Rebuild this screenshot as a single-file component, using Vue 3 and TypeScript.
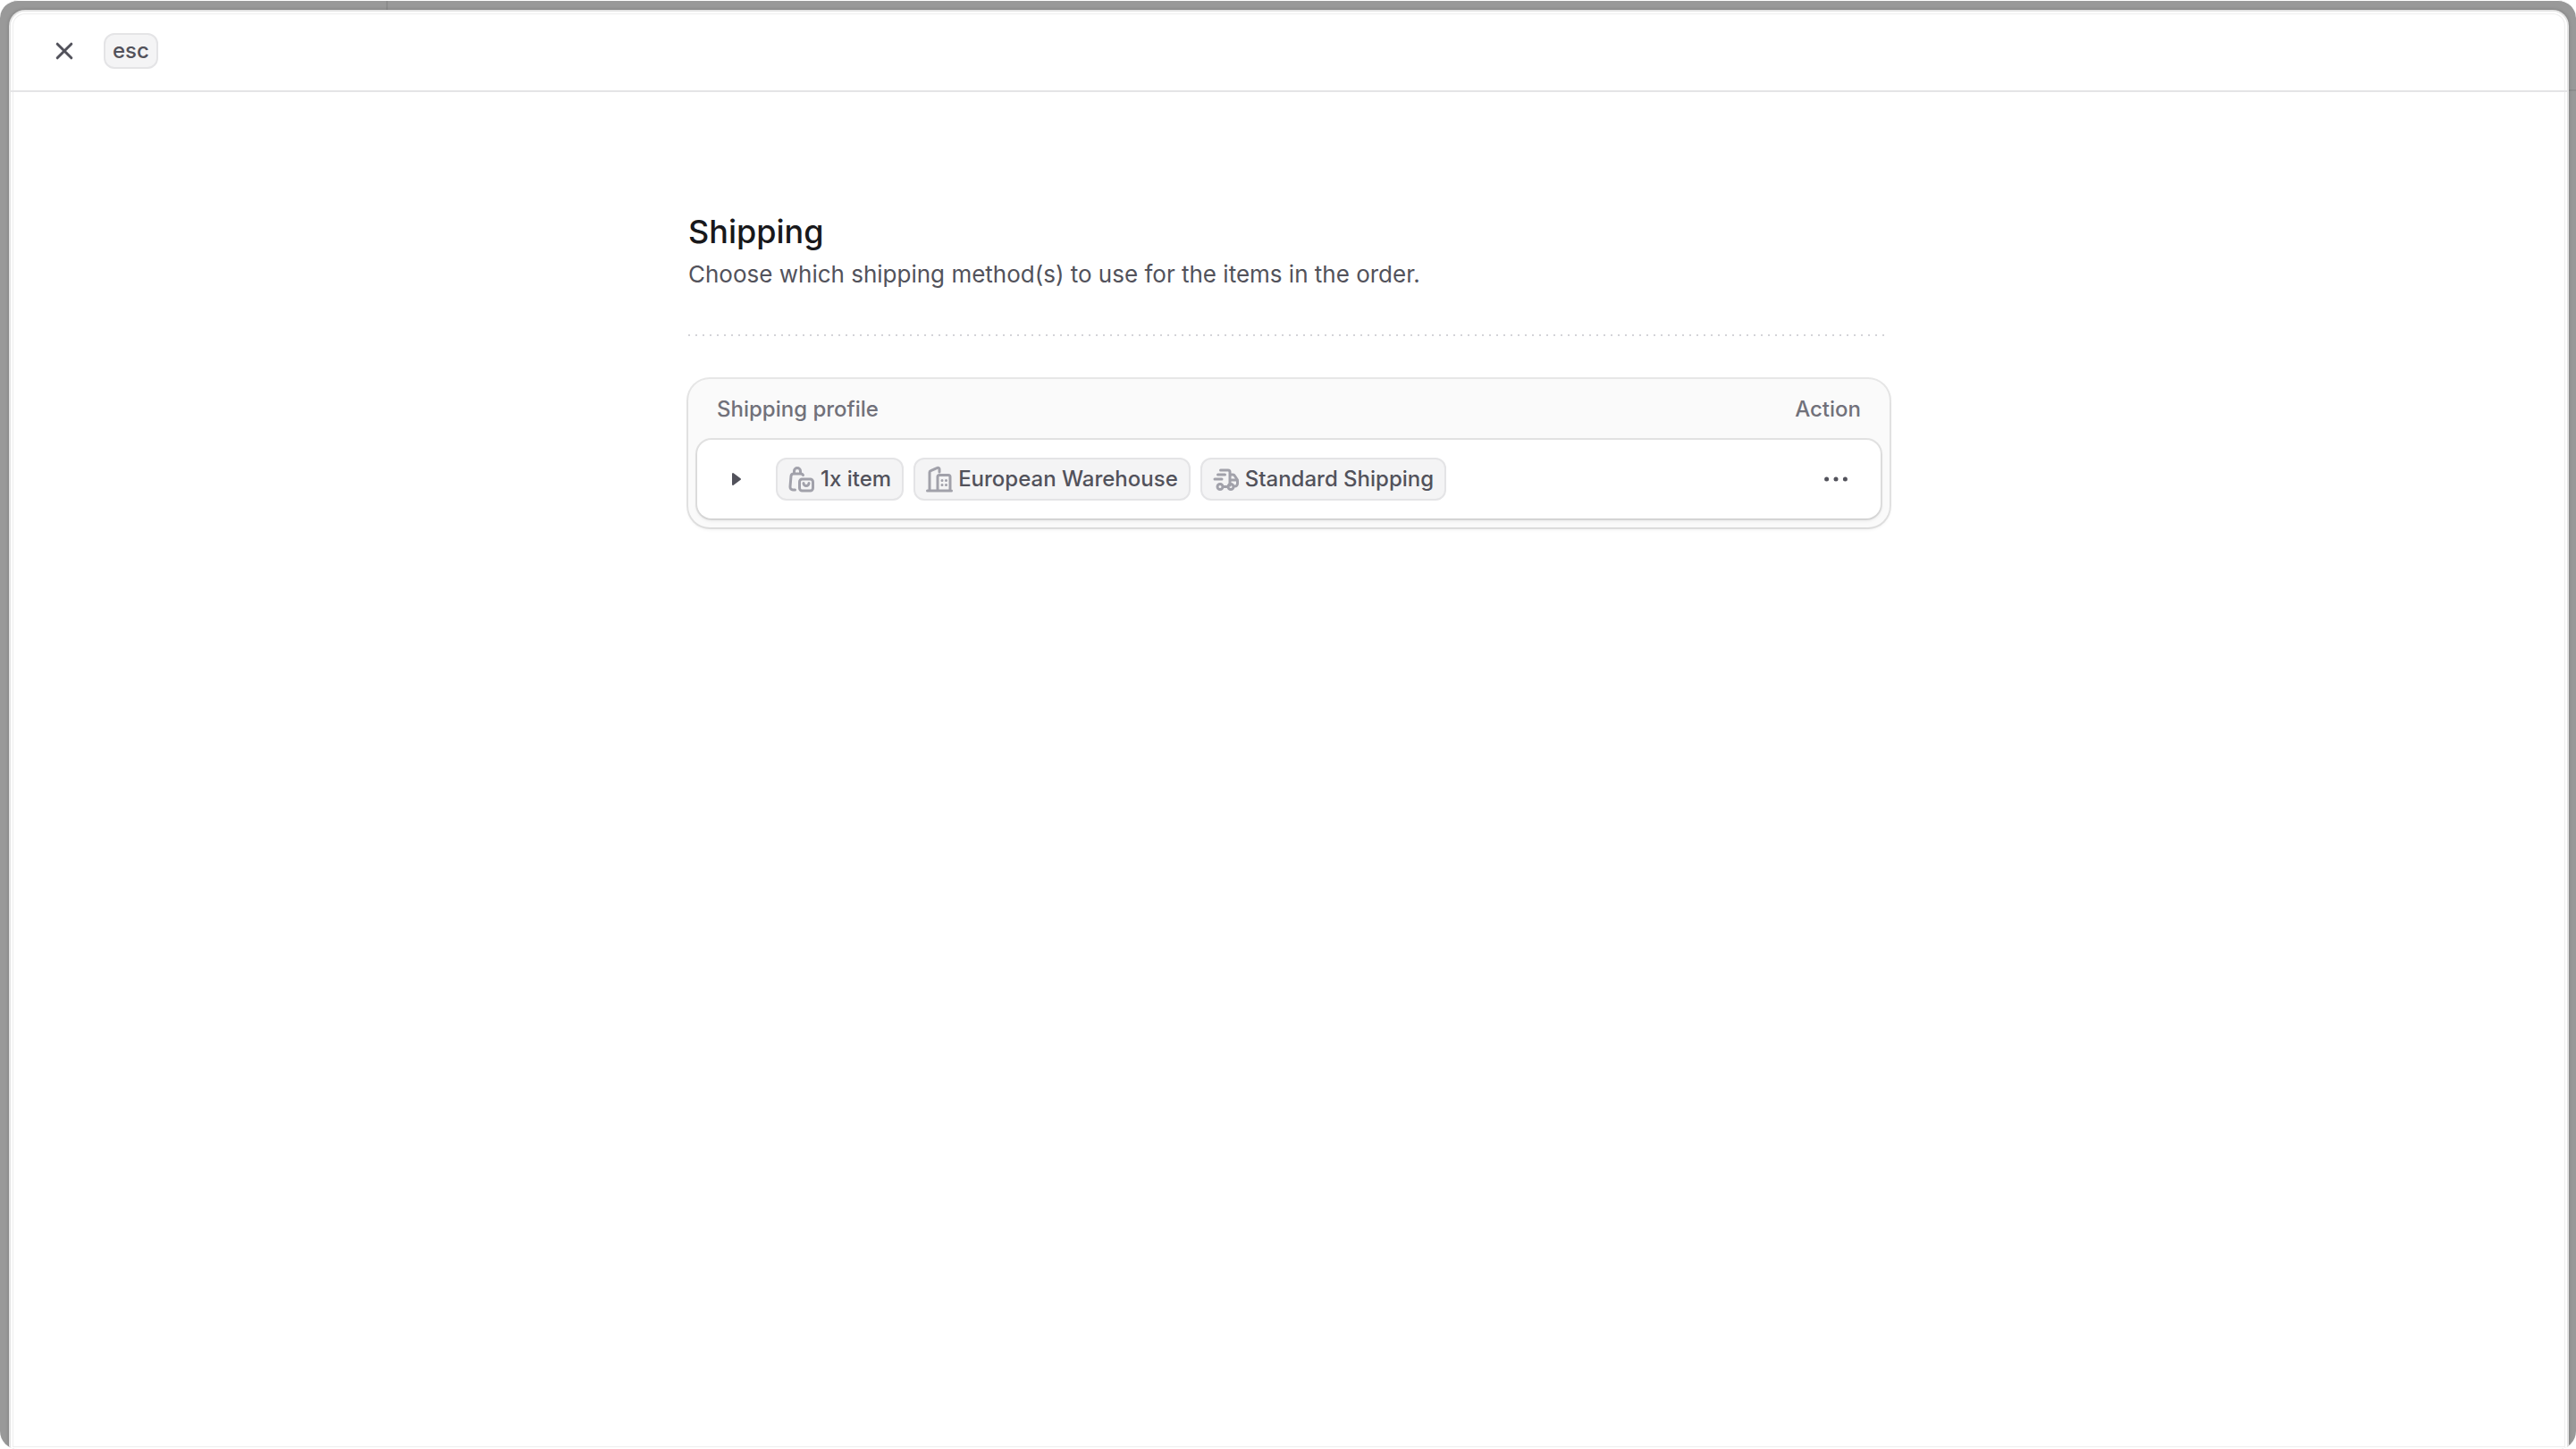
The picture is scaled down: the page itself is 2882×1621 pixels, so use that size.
<script setup lang="ts">
interface Tag {
  icon: 'item' | 'location' | 'shipping'
  label: string
}

const tags: Tag[] = [
  { icon: 'item', label: '1x item' },
  { icon: 'location', label: 'European Warehouse' },
  { icon: 'shipping', label: 'Standard Shipping' },
]
</script>

<template>
  <div class="overlay">
    <section class="modal" role="dialog" aria-labelledby="shipping-title">
      <header class="modal-header">
        <button type="button" class="icon-button" aria-label="Close">
          <svg width="30" height="30" viewBox="0 0 15 15" fill="none" stroke="currentColor" stroke-width="1.5" stroke-linecap="round">
            <path d="M3.6 3.6l7.8 7.8M11.4 3.6l-7.8 7.8" />
          </svg>
        </button>
        <kbd class="kbd">esc</kbd>
      </header>

      <main class="content">
        <h1 id="shipping-title" class="title">Shipping</h1>
        <p class="description">Choose which shipping method(s) to use for the items in the order.</p>
        <div class="divider" />

        <table class="card">
          <thead>
            <tr class="card-head">
              <th scope="col">Shipping profile</th>
              <th scope="col">Action</th>
            </tr>
          </thead>
          <tbody>
            <tr class="profile">
              <td class="profile-main">
                <button type="button" class="icon-button" aria-label="Expand profile">
                  <svg width="30" height="30" viewBox="0 0 30 30" fill="currentColor" stroke="currentColor" stroke-width="2" stroke-linejoin="round">
                    <path d="M11 9v12l8-6z" />
                  </svg>
                </button>
                <ul class="tags">
                  <li v-for="tag in tags" :key="tag.icon" class="tag">
                    <svg class="tag-icon" viewBox="0 0 30 30" fill="none" stroke="currentColor" stroke-width="3" stroke-linecap="round" stroke-linejoin="round">
                      <template v-if="tag.icon === 'item'">
                        <path d="M7.5 27H5a3 3 0 0 1-3-3.3l1-12A3 3 0 0 1 6 9h8a3 3 0 0 1 2.5 1.500M6.5 9V6a3.5 3.5 0 0 1 7 0v3" />
                        <rect x="12.5" y="15" width="15" height="13" rx="3" />
                        <path d="M17 19.5a3 3 0 0 0 6 0" />
                      </template>
                      <template v-else-if="tag.icon === 'location'">
                        <path d="M1.5 28h27M4 28V7.5a2 2 0 0 1 1.3-1.9l7.5-3.2a1.5 1.5 0 0 1 2.2 1.4V7M13 28V12.5a2 2 0 0 1 2-2h10a2 2 0 0 1 2 2V28" />
                        <path d="M18 16.5h.01M22.5 16.5h.01M18 21.5h.01M22.5 21.5h.01" />
                      </template>
                      <template v-else>
                        <path d="M8.5 5h8.5a2 2 0 0 1 2 2v15M5.5 10h8M2 15h8M19 10h3.5a2 2 0 0 1 1.7 1l3 4.5a3 3 0 0 1 .3 1.5v3a3 3 0 0 1-3 3M19 16h8M11.5 23.5h4" />
                        <circle cx="8" cy="23.5" r="3" />
                        <circle cx="20" cy="23.5" r="3" />
                      </template>
                    </svg>
                    <span>{{ tag.label }}</span>
                  </li>
                </ul>
              </td>
              <td>
                <button type="button" class="icon-button" aria-label="Profile actions">
                  <svg width="30" height="30" viewBox="0 0 30 30" fill="currentColor">
                    <circle cx="4.6" cy="15" r="2.5" />
                    <circle cx="15" cy="15" r="2.5" />
                    <circle cx="25.4" cy="15" r="2.5" />
                  </svg>
                </button>
              </td>
            </tr>
          </tbody>
        </table>
      </main>
    </section>
  </div>
</template>

<style>
body {
  background: #fff;
}
</style>

<style scoped>
.overlay {
  box-sizing: border-box;
  height: 100vh;
  padding: 12px 10px 0 12px;
  overflow: hidden;
  border-top: 1px solid #fff;
  border-radius: 20px;
  background:
    linear-gradient(#8d8d8d, #8d8d8d) 432px 0 / 2px 12px no-repeat,
    linear-gradient(#8d8d8d, #8d8d8d) 100% 99px / 10px 2px no-repeat,
    #999;
  font-family: Inter, "Liberation Sans", sans-serif;
  font-size: 24px;
  line-height: 40px;
  color: #52525b;
}

.modal {
  min-height: 100%;
  border-radius: 16px 16px 0 0;
  background: #fff;
  box-shadow:
    inset 0 0 0 2px #fff,
    inset 0 0 0 3px #eee,
    0 0 0 2px #e4e4e4,
    0 0 4px 2px rgba(0, 0, 0, 0.2);
}

.modal-header {
  display: flex;
  align-items: center;
  gap: 16px;
  height: 88px;
  padding: 0 32px;
  border-bottom: 2px solid #e4e4e6;
}

.icon-button {
  display: flex;
  align-items: center;
  justify-content: center;
  flex: none;
  width: 56px;
  height: 56px;
  padding: 0;
  border: 0;
  border-radius: 12px;
  background: none;
  color: #52525b;
}

.kbd {
  box-sizing: border-box;
  height: 40px;
  padding: 0 8px;
  border: 2px solid #e4e4e6;
  border-radius: 12px;
  background: #f4f4f5;
  font: inherit;
  font-weight: 500;
  line-height: 36px;
}

.content {
  box-sizing: border-box;
  max-width: 1440px;
  margin: 0 auto;
  padding: 128px 48px;
}

.title {
  margin: 0;
  font-size: 36px;
  line-height: 56px;
  font-weight: 500;
  color: #18181b;
}

.description {
  margin: 0 0 47px;
  font-size: 26px;
}

.divider {
  height: 2px;
  margin-bottom: 48px;
  background: repeating-linear-gradient(90deg, #d4d4d8 0 2px, transparent 2px 8px);
}

.card {
  display: block;
  padding: 0 10px 10px;
  border-radius: 24px;
  background: #fafafa;
  box-shadow:
    0 0 0 2px rgba(0, 0, 0, 0.09),
    0 2px 4px rgba(0, 0, 0, 0.08);
}

.card thead,
.card tbody {
  display: block;
}

.card-head {
  display: flex;
  justify-content: space-between;
  padding: 14px 22px;
}

.card th {
  padding: 0;
  font-weight: 500;
  color: #71717a;
}

.profile {
  display: flex;
  align-items: center;
  justify-content: space-between;
  box-sizing: border-box;
  height: 88px;
  padding: 0 22px 0 16px;
  border-radius: 16px;
  background: #fff;
  box-shadow:
    0 0 0 2px rgba(0, 0, 0, 0.09),
    0 2px 4px rgba(0, 0, 0, 0.1);
}

.profile td {
  padding: 0;
}

.profile .profile-main {
  display: flex;
  align-items: center;
  gap: 16px;
}

.tags {
  display: flex;
  gap: 11px;
  margin: 0;
  padding: 0;
  list-style: none;
}

.tag {
  display: flex;
  align-items: center;
  gap: 6px;
  box-sizing: border-box;
  height: 48px;
  padding: 0 12px;
  border: 2px solid #e4e4e6;
  border-radius: 12px;
  background: #f4f4f5;
  font-weight: 500;
}

.tag-icon {
  width: 30px;
  height: 30px;
  color: #a1a1aa;
}
</style>
